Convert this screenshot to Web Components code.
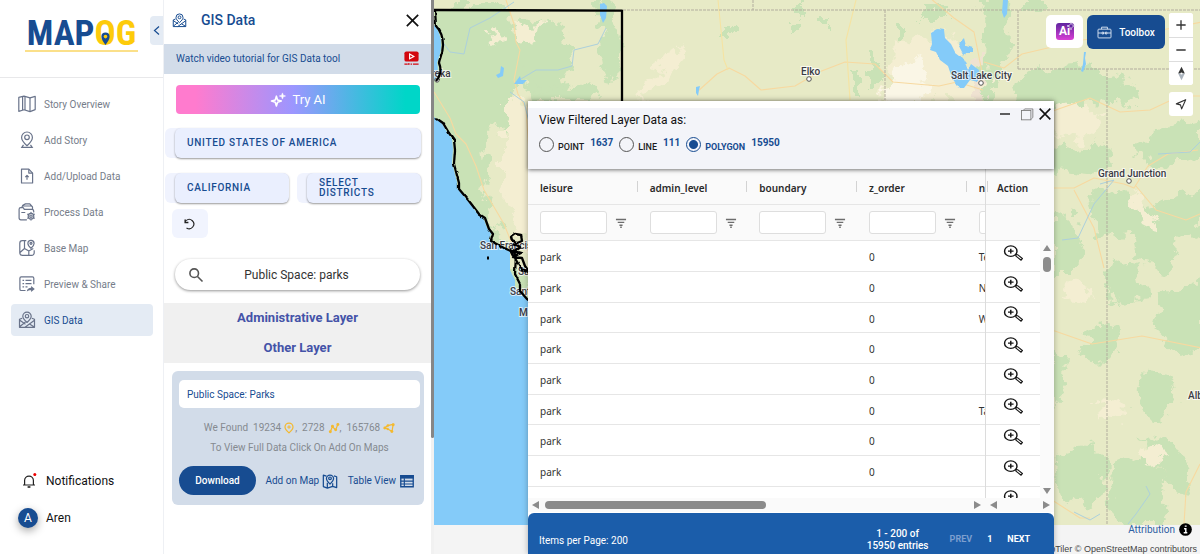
<!DOCTYPE html>
<html lang="en">
<head>
<meta charset="utf-8">
<title>MAPOG - GIS Data</title>
<meta name="viewport" content="width=device-width, initial-scale=1">
<style>
  body { margin: 0; font-family: Roboto, "Liberation Sans", sans-serif; font-size: 10px; color: #1c1c1c; }
</style>
</head>
<body>
<mapog-app></mapog-app>

<script>
const BASE = `
  *, *::before, *::after { box-sizing: border-box; }
  button { font: inherit; color: inherit; background: none; border: 0; padding: 0; cursor: pointer; }
  a { color: inherit; text-decoration: none; }
  svg { display: block; flex: none; }
  input { font: inherit; }
`;

function define(name, html, setup) {
  const tpl = document.createElement('template');
  tpl.innerHTML = html.replace('<style>', '<style>' + BASE);
  customElements.define(name, class extends HTMLElement {
    constructor() {
      super();
      this.attachShadow({ mode: 'open' }).append(tpl.content.cloneNode(true));
    }
    connectedCallback() { if (setup) setup.call(this, this.shadowRoot); }
  });
}

/* ---------- icons ---------- */
const ICONS = {
  map: `<g fill="none" stroke="currentColor" stroke-width="1.2" stroke-linejoin="round"><path d="M.8 2.4 6 1.2l6 1.6 5.2-1.4v13.2L12 16.6 6 14.8.8 16.4z"/><path d="M4.600 1.700v13.400M7 1.500v13.600M12 3v13.400"/></g>`,
  pin: `<g fill="none" stroke="currentColor" stroke-width="1.2"><path d="M9 14.8C5.600 11.600 3.600 9 3.600 6.400a5.400 5.400 0 0 1 10.800 0c0 2.600-2 5.200-5.400 8.400z"/><circle cx="9" cy="6.300" r="2.300"/><path d="M5.500 13.800 3.800 16.300h10.400l-1.700-2.500"/></g>`,
  upload: `<g fill="none" stroke="currentColor" stroke-width="1.200" stroke-linejoin="round"><path d="M3.500 2.200h7.300l3.800 3.900v9.900H3.500z"/><path d="M10.800 2.200v3.900h3.800M9 12.800V8.600M7.300 10.200 9 8.400l1.700 1.800"/></g>`,
  process: `<g fill="none" stroke="currentColor" stroke-width="1.200" stroke-linecap="round" stroke-linejoin="round"><path d="M8.500 16.800H2.800c-1 0-1.700-.7-1.700-1.700V6.200c0-.9.700-1.500 1.600-1.500h2.600l1 1.700h7.500c1.200 0 1.900.6 1.900 1.600v1"/><path d="M3.800 4.500 4.800 2.300 7.500.9h4.300L14.500 4v2.200M5.500 3h7.800M3.800 9.500h3"/><circle cx="13" cy="13.200" r="1.200"/><path d="M13 9.300v1.100M13 16v1.100M9.700 11.200l1 .6M15.300 14.600l1 .6M9.700 15.200l1-.6M15.300 11.800l1-.6"/><circle cx="13" cy="13.200" r="2.800"/></g>`,
  base: `<g fill="none" stroke="currentColor" stroke-width="1.200" stroke-linejoin="round"><path d="M8.300 1.700H4.300a2.500 2.500 0 0 0-2.500 2.500v9.600a2.500 2.500 0 0 0 2.500 2.500h9.400a2.500 2.500 0 0 0 2.500-2.500v-2.500M6.500 1.700v7.800L2 13.500M6.500 9.500l4.300 2.500v4.300M10.800 12l4.500-2.500"/><path d="M13 9.300C11 7.400 9.900 5.900 9.900 4.400a3.100 3.100 0 0 1 6.200 0c0 1.500-1.100 3-3.100 4.900z"/><circle cx="13" cy="4.300" r="1"/></g>`,
  preview: `<g fill="none" stroke="currentColor" stroke-width="1.200"><path d="M7.500 15.500H3.200c-.8 0-1.300-.5-1.300-1.300V3.200c0-.8.500-1.300 1.300-1.300h11.300c.800 0 1.300.5 1.300 1.300v6"/><path d="M4.500 5.400h1.600M7.500 5.400h6M4.500 8.600h1.600M7.500 8.600h6M4.500 11.800h1.600M7.500 11.800h2"/></g><path d="M8.800 16.500c.3-2.500 2-3.700 4.300-3.700V11l3.700 3-3.700 3v-1.700c-1.900 0-3.200.3-4.300 1.200z" fill="currentColor"/>`,
  gis: `<g fill="none" stroke="currentColor" stroke-width="1.200" stroke-linejoin="round"><path d="M4.200 7.200 1.500 8.300v8h15v-8l-2.700-1.100M1.500 9l6 4.200M16.500 9.200l-9.500 7M1.600 15.800 7.500 11M11.500 13l4.800 3"/><path d="M9 11.500C6.100 9 4.800 7.100 4.800 5.300a4.200 4.200 0 0 1 8.400 0c0 1.800-1.300 3.700-4.200 6.200z"/><circle cx="9" cy="5.200" r="1.700"/></g>`,
  bell: `<g fill="none" stroke="#222" stroke-width="1.200"><path d="M4.600 12.800V8.500a4.400 4.400 0 0 1 8.800 0v4.300M3 13h12"/><path d="M7.600 15h2.800" stroke-width="1.600"/></g><circle cx="14.800" cy="2.500" r="1.500" fill="#e00"/>`,
  close: `<path d="m3 3 12 12m0-12-12 12" stroke="currentColor" stroke-width="1.800" fill="none"/>`,
  video: `<rect x="1.500" y="1.500" width="15" height="10.800" rx="2" fill="#d3070f"/><path d="M7 4.300v5l4.500-2.500z" fill="#d3070f" stroke="#fff" stroke-width="1.200"/><path d="M1.500 14.900h3.500M6.200 13.800v2.200M8 14.900h1.500M10.500 14.900h6" stroke="#d3070f" stroke-width="1.300"/>`,
  spark: `<path d="M7.200 4.700 8.500 8.900l4.200 1.300-4.200 1.300-1.300 4.200-1.300-4.200-4.200-1.300 4.200-1.300z" fill="none" stroke="#fff" stroke-width="1.800" stroke-linejoin="round"/><path d="m14 1 .9 2.600 2.600.9-2.600.9L14 8l-.9-2.600-2.600-.9 2.600-.9z" fill="#fff" stroke="#fff" stroke-width=".6"/>`,
  undo: `<g fill="none" stroke="#222" stroke-width="1.300"><path d="M4.600 5.200a5.200 5.200 0 1 1 .5 8.200"/><path d="M3.600 3.800v3.400h3.600" stroke-width="1.700"/></g>`,
  search: `<g fill="none" stroke="#555" stroke-width="1.600"><circle cx="7.200" cy="7.200" r="4.300"/><path d="m10.500 10.500 5 5"/></g>`,
  point: `<g fill="none" stroke="#f4b92f" stroke-width="1.800"><path d="M9 16.300C5 12.900 3 10.200 3 7.600a6 6 0 0 1 12 0c0 2.600-2 5.300-6 8.700z"/><path d="M9 4.900v5.400M6.300 7.600h5.400" stroke-width="1.500"/></g>`,
  line: `<path d="M3.500 14.500 6.500 7l5 5 3-8" fill="none" stroke="#f4b92f" stroke-width="1.800"/><g fill="#f4b92f"><circle cx="3.500" cy="14.500" r="2.200"/><circle cx="6.700" cy="6.500" r="2.200"/><circle cx="11.500" cy="11.800" r="2.200"/><circle cx="14.800" cy="3.800" r="2.200"/></g>`,
  poly: `<path d="M2.500 9 7 5.500 15.300 3.500 13.500 14 7 10.500z" fill="none" stroke="#f4b92f" stroke-width="1.800"/><g fill="#f4b92f"><circle cx="2.800" cy="9" r="2.200"/><circle cx="7.300" cy="5.300" r="1.900"/><circle cx="15.300" cy="4" r="2.200"/><circle cx="13.300" cy="14.200" r="2.200"/><circle cx="7" cy="10.500" r="1.700"/></g>`,
  addmap: `<g fill="none" stroke="#174c91" stroke-width="1.400" stroke-linejoin="round"><path d="M5 3.500 1.500 2.500v12.800L6 17l6-2 4.500 1.500V4.200L13.500 3.300M6 11v6M12 11.500V15"/><path d="M9 12.500C6.200 10 5 8.100 5 6.300a4 4 0 0 1 8 0c0 1.800-1.200 3.700-4 6.200z"/><circle cx="9" cy="6" r="1.500"/></g>`,
  table: `<path d="M2 3h14v12.500H2z" fill="none" stroke="#174c91" stroke-width="1.500"/><path d="M1.300 2.300h15.400v4H1.300z" fill="#174c91"/><path d="M2 9.200h14M2 12.400h14M6 6v9" stroke="#174c91" stroke-width="1.300"/>`,
  filter: `<path d="M2.500 4.500h13M4.800 8.200h8.400M7 11.900h4M8 14.500h2" stroke="#6d6d6d" stroke-width="1.700" fill="none"/>`,
  toolbox: `<g fill="none" stroke="#dce6f3" stroke-width="1.100" stroke-linejoin="round"><rect x="1.200" y="5" width="15.600" height="10.500" rx="1"/><path d="M5.500 5V2.600h7V5M1.200 9.600h5M7.800 9.600h2.400M11.800 9.600h5"/><rect x="6.200" y="8.600" width="1.600" height="2.200"/><rect x="10.200" y="8.600" width="1.600" height="2.200"/></g>`,
  plus: `<path d="M9 2v14M2 9h14" stroke="#333" stroke-width="2" fill="none"/>`,
  minus: `<path d="M2 9h14" stroke="#333" stroke-width="2" fill="none"/>`,
  compass: `<path d="M9 1 13 9H5z" fill="#333"/><path d="m9 17 4-8H5z" fill="#aab3bd"/><circle cx="9" cy="9" r="1.300" fill="#fff"/>`,
  locate: `<path d="m2 8.800 14-6.300-6 13.800-1.800-6z" fill="none" stroke="#333" stroke-width="1.700" stroke-linejoin="round"/>`,
  winmax: `<g fill="#f3f4f9" stroke="#777" stroke-width="1.100"><path d="M4 4.500 6 2.500h10.500v11l-2 2"/><rect x="2" y="4.500" width="12" height="12"/></g>`,
  winmin: `<path d="M1.500 9h15" stroke="#111" stroke-width="2"/>`,
  info: `<circle cx="9" cy="9" r="8.800" fill="#000"/><path d="M8 4.300h2.600M7 8h2.400v5.300M6.500 13.400h5" stroke="#fff" stroke-width="2" fill="none"/>`,
  zoomin: `<g fill="none" stroke="#151515" stroke-width="1.300"><circle cx="7" cy="6.500" r="5.600"/><path d="M7 4v5M4.500 6.500h5"/><path d="m11.500 10 1.700.3 4.300 4-1.300 1.700-4.600-4.300z" stroke-width="1.100"/></g>`
};

define('ui-icon', `<style>
  :host { display: block; flex: none; width: var(--w, 18px); height: var(--h, var(--w, 18px)); }
  svg { width: 100%; height: 100%; }
</style><svg viewBox="0 0 18 18" aria-hidden="true"></svg>`, function (root) {
  const svg = root.querySelector('svg');
  svg.innerHTML = ICONS[this.getAttribute('name')] || '';
  if (this.hasAttribute('wide')) svg.setAttribute('preserveAspectRatio', 'none');
});

/* ---------- left navigation ---------- */
define('nav-item', `<style>
  :host { display: block; }
  a { display: flex; align-items: center; gap: 8px; height: 32px; padding: 0 7px; border-radius: 4px; color: #767d8a; font-size: 10px; }
  ui-icon { color: #69738a; }
  :host([active]) a { background: #e4ebf4; color: #174c91; }
</style><a href="#"><ui-icon></ui-icon><slot></slot></a>`, function (root) {
  const icon = document.createElement('ui-icon');
  icon.setAttribute('name', this.getAttribute('icon'));
  root.querySelector('ui-icon').replaceWith(icon);
});

define('side-nav', `<style>
  :host { display: flex; flex-direction: column; background: #fff; border-right: 1px solid #eef0f4; position: relative; }
  .brand { height: 78px; border-bottom: 1px solid #e8e8ea; padding: 12px 0 0 25px; }
  .logo { display: block; position: relative; width: 113px; height: 40px; border-bottom: 2px solid #fbe08a; text-align: center;
    font: 700 35px/44px "Liberation Sans Narrow", "Roboto Condensed", "Open Sans Condensed", "DejaVu Sans Condensed", sans-serif; color: #174c91; white-space: nowrap; }
  .logo span { color: #fdcb0a; }
  .logo svg { position: absolute; left: 76px; top: 20px; }
  .tab { position: absolute; right: 0; top: 16px; width: 13px; height: 29px; background: #e4ebf4; border-radius: 4px 0 0 4px; display: grid; place-items: center; }
  nav { padding: 10px 10px 0 11px; display: flex; flex-direction: column; gap: 4px; }
  .foot { margin-top: auto; padding: 0 18px 26px; display: grid; gap: 17px; font-size: 12px; line-height: 20px; color: #111; }
  .foot a { display: flex; align-items: center; gap: 8px; }
  .bell { padding-left: 2px; }
  .avatar { width: 20px; height: 20px; border-radius: 50%; background: #174c91; color: #fff; text-align: center; box-shadow: 0 3px 8px rgba(0,0,0,.35); }
</style>
<div class="brand"><a class="logo" href="#" aria-label="MAPOG">MAP<span>OG</span>
  <svg width="9" height="13" viewBox="0 0 9 13"><path d="M4.500 13C2 9.500.4 7 .4 4.700a4.100 4.100 0 0 1 8.200 0C8.600 7 7 9.500 4.500 13z" fill="#174c91"/><circle cx="4.500" cy="4.600" r="1.800" fill="#fdcb0a"/></svg></a></div>
<button class="tab" aria-label="Collapse"><svg width="7" height="11" viewBox="0 0 7 11"><path d="M6 1.500 1.500 5.500 6 9.500" fill="none" stroke="#174c91" stroke-width="1.200"/></svg></button>
<nav>
  <nav-item icon="map">Story Overview</nav-item>
  <nav-item icon="pin">Add Story</nav-item>
  <nav-item icon="upload">Add/Upload Data</nav-item>
  <nav-item icon="process">Process Data</nav-item>
  <nav-item icon="base">Base Map</nav-item>
  <nav-item icon="preview">Preview &amp; Share</nav-item>
  <nav-item icon="gis" active>GIS Data</nav-item>
</nav>
<div class="foot">
  <a href="#" class="bell"><ui-icon name="bell"></ui-icon><span>Notifications</span></a>
  <a href="#"><span class="avatar">A</span><span>Aren</span></a>
</div>`);

/* ---------- GIS data panel ---------- */
define('place-chip', `<style>
  :host { display: flex; min-width: 0; background: #f0f3fe; border-radius: 6px; padding-left: 10px; }
  button { flex: 1; min-height: 30px; padding: 0 12px; text-align: left; text-transform: uppercase; background: #eaeffe; border-radius: 6px; color: #174c91;
    font-weight: 500; font-size: 10px; line-height: 10px; letter-spacing: .07em; box-shadow: 0 1px 2px rgba(0,0,0,.4); }
</style><button><slot></slot></button>`);

define('gis-panel', `<style>
  :host { display: flex; background: #fff; color: #174c91; }
  .body { flex: 1; min-width: 0; }
  .scroll { width: 3px; background: #f1f1f1; }
  .scroll i { display: block; width: 3px; height: 79%; background: #868686; border-radius: 0 0 2px 2px; }
  header { display: flex; align-items: center; height: 44px; padding: 0 10px 4px 8px; }
  h1 { margin: 0 auto 0 14px; font-size: 14px; font-weight: 500; }
  header button { color: #111; }
  .video { display: flex; align-items: center; justify-content: space-between; height: 30px; padding: 0 11px 2px 12px; background: #d2dce9; font-size: 10px; }
  .ai { display: flex; align-items: center; justify-content: center; gap: 6px; margin: 11px 11px 0 12px; width: calc(100% - 23px); height: 29px; border-radius: 4px; color: #fff; font-size: 13px;
    background: linear-gradient(90deg, #ff7bce 8%, #9c96ff 48%, #00d6c8 94%); }
  .places { display: grid; grid-template-columns: 1fr 1fr; gap: 15px 8px; padding: 14px 10px 0 1px; }
  .places :first-child { grid-column: 1 / -1; }
  .undo { display: grid; place-items: center; width: 36px; height: 29px; margin: 6px 0 0 8px; border-radius: 6px; background: #f1f4fe; }
  .search { display: flex; align-items: center; height: 31px; margin: 21px 11px 0; padding: 0 12px; border-radius: 16px; box-shadow: 0 1px 3px rgba(0,0,0,.42); }
  .search input { flex: 1; min-width: 0; border: 0; outline: 0; padding: 0 20px 0 0; text-align: center; font-size: 12px; color: #333; background: none; }
  .layers { margin-top: 13px; background: #f0f0f0; text-align: center; }
  h2 { margin: 0; font-size: 13px; line-height: 30px; font-weight: 700; color: #4453a8; }
  .card { margin: 8px 7px 0 8px; padding: 9px 4px 10px 7px; border-radius: 6px; background: #d2dce9; }
  .card input { display: block; width: 100%; height: 28px; border: 0; border-radius: 5px; padding: 0 8px; background: #fff; color: #174c91; font-size: 10px; }
  .found { margin-top: 10px; color: #858a90; text-align: center; line-height: 20px; }
  .found p { margin: 0; display: flex; justify-content: center; align-items: center; white-space: pre; }
  .found ui-icon { --w: 12px; margin-left: 2px; }
  .found span + ui-icon + span { margin-right: 1px; }
  .acts { display: flex; align-items: center; justify-content: space-between; margin-top: 8px; padding-right: 5px; }
  .acts button { display: flex; align-items: center; gap: 3px; }
  .acts .dl { height: 29px; width: 77px; justify-content: center; border-radius: 15px; background: #174c91; color: #fff; font-weight: 500; }
  .acts ui-icon { --w: 16px; }
</style>
<div class="body">
  <header><ui-icon name="gis" style="--w:15px"></ui-icon><h1>GIS Data</h1><button aria-label="Close"><ui-icon name="close" style="--w:17px"></ui-icon></button></header>
  <a class="video" href="#"><span>Watch video tutorial for GIS Data tool</span><ui-icon name="video" style="--w:17px"></ui-icon></a>
  <button class="ai"><ui-icon name="spark" style="--w:16px"></ui-icon>Try AI</button>
  <div class="places">
    <place-chip>United States of America</place-chip>
    <place-chip>California</place-chip>
    <place-chip>Select Districts</place-chip>
  </div>
  <button class="undo" aria-label="Reset"><ui-icon name="undo" style="--w:16px"></ui-icon></button>
  <label class="search"><ui-icon name="search" style="--w:18px"></ui-icon><input aria-label="Search layer" value="Public Space: parks"></label>
  <section class="layers"><h2>Administrative Layer</h2><h2>Other Layer</h2></section>
  <section class="card">
    <input aria-label="Layer name" value="Public Space: Parks">
    <div class="found">
      <p><span>We Found  19234</span><ui-icon name="point"></ui-icon><span>,  2728</span><ui-icon name="line"></ui-icon><span>,  165768</span><ui-icon name="poly"></ui-icon></p>
      <p>To View Full Data Click On Add On Maps</p>
    </div>
    <div class="acts">
      <button class="dl">Download</button>
      <button>Add on Map<ui-icon name="addmap"></ui-icon></button>
      <button>Table View<ui-icon name="table"></ui-icon></button>
    </div>
  </section>
</div>
<div class="scroll"><i></i></div>`);

/* ---------- base map ---------- */
define('base-map', `<style>
  :host { display: block; min-height: 0; overflow: hidden; background: #e7eac6; }
  svg { width: 100%; height: 100%; }
  text { font-family: Roboto, sans-serif; font-size: 10px; font-weight: 500; fill: #3b3b45; stroke: #fff; stroke-opacity: .7; stroke-width: 2px; paint-order: stroke; }
</style>
<svg viewBox="434 0 766 525" preserveAspectRatio="xMidYMid slice">
  <defs>
    <filter id="rough" x="-5%" y="-5%" width="110%" height="110%"><feTurbulence type="fractalNoise" baseFrequency=".07" numOctaves="5" seed="7"/><feDisplacementMap in="SourceGraphic" scale="26" xChannelSelector="R" yChannelSelector="G"/></filter>
    <filter id="edge" x="-5%" y="-5%" width="110%" height="110%"><feTurbulence type="fractalNoise" baseFrequency=".12" numOctaves="2" seed="3"/><feDisplacementMap in="SourceGraphic" scale="3" xChannelSelector="R" yChannelSelector="G"/></filter>
  </defs>
  <rect x="434" width="766" height="525" fill="#e7eac6"/>
  <g filter="url(#rough)">
    <g fill="#c9e2b6">
      <path d="M425 5h78l12 25 6-14 20 6 18 8 2 28-12 18 20 10 18-4 12 18h-62l-15-22-12 20-4 26-20 10 4 36-8 20 12 30 10 20 8 20-4 14-22-10-18-24-16-14-12-50-17-26z"/>
      <path d="M596-4h14l10 50-2 30-10 10-6-30zM530 24l34 2 8 40-6 20-30 4-20-30z"/>
      <path d="M985-5h22l2 50-8 30-12 28h-10l4-40z"/>
      <path d="M1013 84l18-14 50-4 30 8 22 14 4 14-50-2-30 12-40-8z"/>
      <path d="M1050 146l30 4 30-6 2 22-22 10-40-4z"/>
      <path d="M1136 148l22-18 44-12v40l-30 8-22-4z"/>
      <path d="M1092 192l34 4 22 10 54-18v40l-24 10-8 34-30-6-8-34-36 4z"/>
      <path d="M1052 210l20 6 12 30-10 26h-22zM1108 258l32 12 6 34-26 2-16-20z"/>
      <path d="M1160 296l44-14v62l-24 12-26-24zM1090 330l22-8 10 24-20 20-18-10z"/>
      <path d="M1140 372l30 4 8 30-22 14-20-20zM1052 350l14 8-2 40-12 4z"/>
      <path d="M1055 452l38-6 14 14-4 30-20 14-24-8zM1112 468l34-14 22 24-6 46h-46l-6-26z"/>
      <path d="M1142 436l36 6 14 34-8 22-28-34zM508 262l14 6 14 30-12 4-14-24zM920 8h30v10h-30zM820 18h9v10h-9zM896 26h7v14h-7zM870 50h8v42h-8zM852 70h8v26h-8zM1028-4h14v14h-14zM794 4h12v10h-12zM792 20h8v12h-8zM722 26h14v8h-14z"/>
    </g>
    <g fill="#f4eed2">
      <path d="M503 98h18l12 10v88l8 60h-14l-14-40-10-30z"/>
      <path d="M488 30l8 2 2 14-8-4zM514 20l14 8 10-8-4 22-12 2z"/>
      <path d="M893 44l18-6 22 4 2-16 20 8 14 36 20 14-10 18h-96l6-26z"/>
      <path d="M672 50l14-6-2 16-14 16-28 22-6 4 14-20zM637 92l12-8-4 16h-10z"/>
      <path d="M1050 108l30-4 20 12-6 26-34-4-12-8zM1130 196l10-2 16 24 2 18-10-4z"/>
      <path d="M1140 450l14-6 10 14-20 8zM1064 280l30 10-6 16-26-8zM1096 400l30 4-4 18-24-4z"/>
      <path d="M975 50h6l2 55h-8z" fill="#efe2d1"/>
    </g>
    <path d="M890 70l30-14 10 36-14 12h-32z" fill="#faf6e6"/>
  </g>
  <g fill="none" stroke="#f7d9a0" stroke-width="1.100" stroke-linejoin="round">
    <path d="M506 0l8 24 2 18 4 8-6 30 4 14 8 14 4 60 14 60"/>
    <path d="M434 92l16 26 6 16 10 10 10 22 8 24 20 34 8 20 16 6"/>
    <path d="M697 92l20-18 12-6 16 8 16 14 34-4 24-14 26-10 30 2 18 18 46 4 18-4 26 8M984 62l20 6 18-14 60-14 70-8 50-10M930-2l24 20 20 14 8 40"/>
    <path d="M1050 112l40-14 30 14 30-2 30-14h22M1050 188h24l20-10 30 6 10 4 14-22 20-12 30-4M1136 186l20 24 30 10 14-6M1074 190l20 38 10 40"/>
    <path d="M718 0l6 60 4 10M856 0l-10 40 4 60" stroke="#f5e3a2"/>
    <path d="M1052 500l28 18h10M1200 464l-14 28-2 32M1052 330l40 14 50-8 60 12" />
  </g>
  <g fill="none" stroke="#acd0dc" stroke-width="1"><path d="M434 30l16 22 14 2 6-26 20-10 24-16M516 82l20-12h22l14-4 2-16 24-6 8-16M510 92l14 10 6 24M1100 184l14-4-20 24-16 34-16 2M1200 142l-10 10-32 2M1146 486l4 8-14 20-8 10M1074 512l16 8 10-6"/></g>
  <path d="M623 10h577M753 0v10M885 10v90M1018 10v60M1018 69h182M1107 69v456" fill="none" stroke="#b2ad9e" stroke-width="1" stroke-dasharray="3 1"/>
  <g fill="#84cbf9">
    <path filter="url(#edge)" d="M931 33l7-4 6 1 1 8 6 6 4 8 8 6 5 12 3-6 8 6-1 12-8-2-6 8h-5l-7-10-4-12-8-6-4-8-6-2 2-6zM958 44l6-6 2 8 7 2v4l-7 0-2 4-3-6z"/>
    <path d="M600 4l4-1 3 3-1 12-3 5-3-8zM1003 0h5l-1 14-3 4-2-6zM1084 52l2 0-1 6 1 6-3 8-2-1 2-7zM696 87l4-1-1 4-1 6-2-3zM501 66l3 2-1 8-5 2-2-3 4-2zM514 84l6-8 1 4 6 0-4 4-8 0z"/>
  </g>
  <path d="M434 25c5 5 7 13 7 20 0 9-3 14-4 18 2 7 0 14-3 18zM434 117l7 5 6 10 5 7 1 10-1 14 5 19v6l10 12 10 13 6 4 4 11 4 5-2 7 13 7 8 3v20l5 10v7l7 8 6 4v226h-94z" fill="#84cbf9"/>
  <g>
    <circle cx="437" cy="80" r="2.200" fill="#fff" stroke="#555"/>
    <circle cx="809" cy="79" r="2.300" fill="#fff" stroke="#555"/>
    <circle cx="981" cy="83" r="2.300" fill="#fff" stroke="#555"/>
    <circle cx="1129" cy="181" r="2.300" fill="#fff" stroke="#555"/>
    <text x="420" y="77">Eureka</text>
    <text x="801" y="75">Elko</text>
    <text x="951" y="79">Salt Lake City</text>
    <text x="1098" y="177">Grand Junction</text>
    <text x="480" y="249">San Francisco</text>
    <text x="518" y="275">San Jose</text>
    <text x="510" y="295">Santa Cruz</text>
    <text x="519" y="316">Monterey</text>
    <text x="1188" y="399">Albuquerque</text>
  </g>
  <g fill="none" stroke="#000" stroke-width="2.300" stroke-linejoin="round">
    <path d="M434 10l188 .6V110"/>
    <path filter="url(#edge)" d="M435 10l1 16c5 5 7 12 7 19 0 9-4 14-4 18 3 7 1 14-3 18M436 118l7 5 6 10 5 7 1 10-1 14 5 19v6l10 12 10 13 6 4 4 11 4 5-2 7 13 7 9 4 3 2-1 20 5 10v7l7 8 9 6M511 237l4-3 6 1 1 6-5 2-5-2zM512 244l8 3-6 4 7 2-8 4 9 1 3 8 5 7-8-3-6-10-5-10 6 3"/>
    <path d="M487 258h2" stroke-width="3"/>
  </g>
</svg>`);

define('map-tools', `<style>
  :host { display: flex; align-items: flex-start; gap: 4px; font-size: 10px; }
  button { display: flex; align-items: center; justify-content: center; background: #fff; }
  .ai { width: 37px; height: 33px; margin-top: 2px; border-radius: 5px; }
  .ai span { display: grid; place-items: center; position: relative; width: 18px; height: 17px; border-radius: 3px; background: linear-gradient(#5f259f, #d83fd4); color: #fff; font-weight: 700; font-size: 12px; line-height: 17px; }
  .ai svg { position: absolute; right: -1px; top: -1px; }
  .box { gap: 7px; width: 78px; height: 34px; margin-top: 2px; border-radius: 6px; background: #174c91; color: #fff; font-weight: 500; }
  .col { display: grid; gap: 7px; }
  .grp { border-radius: 3px; overflow: hidden; background: #fff; }
  .grp button { width: 24px; height: 24px; border-top: 1px solid #ddd; }
  .grp button:first-child { border-top: 0; }
</style>
<button class="ai" aria-label="AI assistant"><span>Ai<svg width="8" height="8" viewBox="0 0 8 8"><path d="M4 0 5 3l3 1-3 1-1 3-1-3-3-1 3-1z" fill="#5f259f" stroke="#fff" stroke-width=".5"/></svg></span></button>
<button class="box"><ui-icon name="toolbox" style="--w:15px"></ui-icon>Toolbox</button>
<div class="col">
  <div class="grp"><button aria-label="Zoom in"><ui-icon name="plus" style="--w:12px"></ui-icon></button><button aria-label="Zoom out"><ui-icon name="minus" style="--w:12px"></ui-icon></button><button aria-label="Reset bearing"><ui-icon name="compass" style="--w:15px"></ui-icon></button></div>
  <div class="grp"><button aria-label="My location"><ui-icon name="locate" style="--w:12px"></ui-icon></button></div>
</div>`);

/* ---------- filtered data window ---------- */
define('data-grid', `<style>
  :host { display: flex; flex-direction: column; min-height: 0; background: #fff; color: #333; font-family: "Noto Sans", "Open Sans", sans-serif; font-size: 10px; }
  .rows { flex: 1; min-height: 0; display: grid; grid-template-columns: minmax(0, 1fr) 55px 14px; overflow: hidden; }
  .main, .pin { overflow: hidden; }
  .pin { border-left: 1px solid #dcdcdc; }
  table { border-collapse: separate; border-spacing: 0; table-layout: fixed; width: 100%; }
  .main table { width: 658px; }
  th, td { padding: 2px 0 0 12px; text-align: left; border-bottom: 1px solid #e6e6e6; height: 31px; white-space: nowrap; overflow: hidden; }
  tbody tr:nth-child(3n) td { height: 30px; }
  thead th, thead td { height: 36px; background: #fafafa; }
  thead tr + tr td { height: 36px; padding-top: 0; }
  th { font-weight: 600; color: #2a2a2a; }
  .main th { background: linear-gradient(#d3d3d3, #d3d3d3) 100% 50% / 1px 11px no-repeat #fafafa; }
  .filter { display: flex; align-items: center; gap: 7px; }
  .filter input { width: 67px; height: 23px; border: 1px solid #dedede; border-radius: 3px; background: #fff; }
  .pin td { padding: 0 0 6px 17px; }
  .pin thead th { padding-left: 11px; background: linear-gradient(#d3d3d3, #d3d3d3) 1px 50% / 1px 11px no-repeat #fafafa; }
  .pin button { display: block; }
  .vbar { display: flex; flex-direction: column; align-items: center; background: #fafafa; padding: 76px 0 4px; }
  .vbar i { width: 8px; height: 15px; margin: 6px 0 auto; border-radius: 4px; background: #8b8b8b; }
  .hbar { display: flex; align-items: center; height: 14px; padding: 0 4px; background: #fafafa; }
  .hbar i { width: 221px; height: 8px; margin: 0 auto 0 6px; border-radius: 4px; background: #8b8b8b; }
  .hbar .b { margin: 0 46px 0 9px; }
</style>
<div class="rows">
  <div class="main"><table aria-label="Layer attributes"><thead><tr></tr><tr></tr></thead><tbody></tbody></table></div>
  <div class="pin"><table aria-label="Row actions"><thead><tr><th>Action</th></tr><tr><td></td></tr></thead><tbody></tbody></table></div>
  <div class="vbar"><svg width="8" height="6"><path d="M4 0l4 6H0z" fill="#8b8b8b"/></svg><i></i><svg width="8" height="6"><path d="M4 6l4-6H0z" fill="#8b8b8b"/></svg></div>
</div>
<div class="hbar"><svg width="7" height="8"><path d="M0 4l7-4v8z" fill="#8b8b8b"/></svg><i></i><svg width="7" height="8"><path d="M7 4 0 0v8z" fill="#8b8b8b"/></svg><svg class="b" width="7" height="8"><path d="M0 4l7-4v8z" fill="#8b8b8b"/></svg><svg width="7" height="8"><path d="M7 4 0 0v8z" fill="#8b8b8b"/></svg></div>`, function (root) {
  const cols = ['leisure', 'admin_level', 'boundary', 'z_order', 'n', ''];
  const names = ['Te', 'N', 'W', '', '', 'Ta', '', '', ''];
  const [head, filters] = root.querySelectorAll('.main thead tr');
  head.innerHTML = cols.map(c => c ? `<th>${c}</th>` : '<td></td>').join('');
  filters.innerHTML = cols.map(c => c ? `<td><div class="filter"><input aria-label="${c} filter"><ui-icon name="filter" style="--w:14px"></ui-icon></div></td>` : '<td></td>').join('');
  root.querySelector('.main tbody').innerHTML = names.map(n => `<tr><td>park</td><td></td><td></td><td>0</td><td>${n}</td><td></td></tr>`).join('');
  root.querySelector('.pin tbody').innerHTML = names.map(() => `<tr><td><button aria-label="Zoom to feature"><ui-icon wide name="zoomin" style="--w:20px;--h:17px"></ui-icon></button></td></tr>`).join('');
});

define('layer-radio', `<style>
  :host { display: block; }
  label { display: flex; align-items: center; gap: 4px; font-size: 10px; }
  input { appearance: none; width: 15px; height: 15px; margin: 0; border: 1px solid #555; border-radius: 50%; }
  input:checked { border-color: #174c91; background: radial-gradient(#174c91 4px, transparent 5px); }
  span { padding-top: 4px; font-size: 9px; font-weight: 500; }
  b { margin-left: 2px; padding-bottom: 4px; color: #174c91; }
  :host([checked]) span { color: #174c91; font-weight: 700; }
</style><label><input type="radio"><span><slot></slot></span><b></b></label>`, function (root) {
  root.querySelector('input').checked = this.hasAttribute('checked');
  root.querySelector('b').textContent = this.getAttribute('count');
});

define('data-window', `<style>
  :host { display: flex; flex-direction: column; background: #fff; box-shadow: 0 0 6px rgba(0,0,0,.3); }
  header { position: relative; z-index: 1; display: flex; justify-content: space-between; height: 68px; border-top: 7px solid #fff; background: #f3f4f9; box-shadow: 0 1px 4px rgba(0,0,0,.55); padding: 0 1px 0 11px; }
  p { margin: 4px 0 9px; font-size: 12px; line-height: 16px; color: #111; }
  .radios { display: flex; gap: 6px; }
  .win { display: flex; align-items: center; height: 12px; gap: 3px; color: #111; }
  .max { margin-left: 6px; }
  data-grid { flex: 1; }
  footer { display: flex; align-items: flex-end; height: 41px; margin-top: 1px; padding: 0 24px 2px 11px; border-radius: 6px 6px 0 0; background: #1b5daa; color: #fff; font-size: 10px; }
  footer label { margin: 0 auto 6px 0; }
  .count { text-align: center; line-height: 12px; font-weight: 500; width: 70px; }
  .pages { display: flex; align-items: center; gap: 15px; height: 26px; margin-left: 17px; font-size: 9px; font-weight: 700; }
  .pages :first-child { color: #7d9fcf; }
</style>
<header>
  <div><p>View Filtered Layer Data as:</p>
    <div class="radios"><layer-radio count="1637">POINT</layer-radio><layer-radio count="111">LINE</layer-radio><layer-radio count="15950" checked>POLYGON</layer-radio></div></div>
  <div class="win"><button aria-label="Minimize"><ui-icon name="winmin" style="--w:12px"></ui-icon></button><button class="max" aria-label="Maximize"><ui-icon name="winmax" style="--w:14px"></ui-icon></button><button aria-label="Close"><ui-icon name="close" style="--w:16px"></ui-icon></button></div>
</header>
<data-grid></data-grid>
<footer><label>Items per Page: 200</label><div class="count">1 - 200 of<br>15950 entries</div><div class="pages"><button>PREV</button><button>1</button><button>NEXT</button></div></footer>`);

/* ---------- shell ---------- */
define('mapog-app', `<style>
  :host { display: grid; grid-template-columns: 164px 270px minmax(0, 1fr); height: 100vh; min-height: 520px; }
  main { position: relative; display: flex; flex-direction: column; overflow: hidden; background: #f4f4f4; }
  base-map { flex: 1; }
  .credit { height: 29px; text-align: right; }
  .attr { display: flex; justify-content: flex-end; align-items: center; gap: 4px; height: 8px; padding-right: 8px; color: #2d5fa3; font-size: 10px; }
  .osm { display: block; margin: 11px 3px 0 0; font: 9px/10px "Liberation Sans", sans-serif; color: #444; }
  map-tools { position: absolute; top: 13px; right: 7px; }
  data-window { position: absolute; top: 101px; right: 146px; bottom: 0; width: 526px; }
</style>
<side-nav></side-nav>
<gis-panel></gis-panel>
<main>
  <base-map></base-map>
  <div class="credit"><div class="attr"><a href="#">Attribution</a><ui-icon name="info" style="--w:13px"></ui-icon></div><a class="osm" href="#">© MapTiler © OpenStreetMap contributors</a></div>
  <map-tools></map-tools>
  <data-window></data-window>
</main>`);
</script>
</body>
</html>
